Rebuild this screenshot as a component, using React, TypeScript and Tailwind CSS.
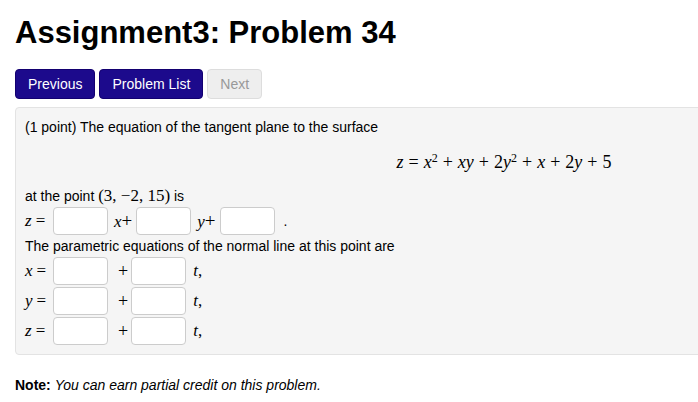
import React from "react";

const serif = "font-['Liberation_Serif','Times_New_Roman',serif]";

function M({ children }: { children: React.ReactNode }) {
  return <span className={`${serif} text-[17px]`}>{children}</span>;
}

function Op({ c }: { c: string }) {
  return <span className="mx-[5px]">{c}</span>;
}

function Box() {
  return <span className="inline-block h-[28px] w-[55px] rounded-[4px] border border-[#cccccc] bg-white" />;
}

function Label({ v }: { v: string }) {
  return (
    <span className={`${serif} w-[28px] text-[17px]`}>
      <i>{v}</i>
      <span className="ml-[4px]">=</span>
    </span>
  );
}

function LineRow({ v }: { v: string }) {
  return (
    <div className="flex h-[30px] items-center">
      <Label v={v} />
      <Box />
      <span className={`${serif} ml-[10px] mr-[3px] text-[18px]`}>+</span>
      <Box />
      <span className={`${serif} ml-[7px] text-[17px]`}>
        <i>t</i>,
      </span>
    </div>
  );
}

export default function App() {
  return (
    <div className="h-[402px] w-[698px] overflow-hidden bg-white font-['Liberation_Sans',Arial,sans-serif] text-black">
      <div className="px-[15px]">
        <h1 className="pt-[15px] text-[31px] font-bold leading-[36px]">Assignment3: Problem 34</h1>

        <div className="mt-[18px] flex gap-1 text-[14px]">
          <button className="h-[30px] rounded-[4px] border border-[#130070] bg-[#1c0a8c] px-[12px] text-white">
            Previous
          </button>
          <button className="h-[30px] rounded-[4px] border border-[#130070] bg-[#1c0a8c] px-[12px] text-white">
            Problem List
          </button>
          <button className="h-[30px] rounded-[4px] border border-[#dddddd] bg-[#eeeeee] px-[12px] text-[#999999]">
            Next
          </button>
        </div>

        <div className="mt-2 w-[978px] rounded-[4px] border border-[#e3e3e3] bg-[#f5f5f5] px-[9px] pb-[8px] pt-[9px] text-[14px] leading-[20px]">
          <p>(1 point) The equation of the tangent plane to the surface</p>

          <div className="flex h-[49px] items-center justify-center">
            <span className={`${serif} text-[18px]`}>
              <i>z</i>
              <Op c="=" />
              <i>x</i>
              <sup className="text-[12px]">2</sup>
              <Op c="+" />
              <i>xy</i>
              <Op c="+" />
              2<i>y</i>
              <sup className="text-[12px]">2</sup>
              <Op c="+" />
              <i>x</i>
              <Op c="+" />
              2<i>y</i>
              <Op c="+" />5
            </span>
          </div>

          <p>
            at the point <M>(3, −2, 15)</M> is
          </p>

          <div className="flex h-[30px] items-center">
            <Label v="z" />
            <Box />
            <span className={`${serif} ml-[6px] mr-[4px] text-[17px]`}>
              <i>x</i>
              <span className="text-[19px]">+</span>
            </span>
            <Box />
            <span className={`${serif} ml-[6px] mr-[4px] text-[17px]`}>
              <i>y</i>
              <span className="text-[19px]">+</span>
            </span>
            <Box />
            <span className="ml-[9px]">.</span>
          </div>

          <p>The parametric equations of the normal line at this point are</p>

          <LineRow v="x" />
          <LineRow v="y" />
          <LineRow v="z" />
        </div>

        <p className="mt-[20px] text-[14px]">
          <b>Note:</b> <i>You can earn partial credit on this problem.</i>
        </p>
      </div>
    </div>
  );
}
